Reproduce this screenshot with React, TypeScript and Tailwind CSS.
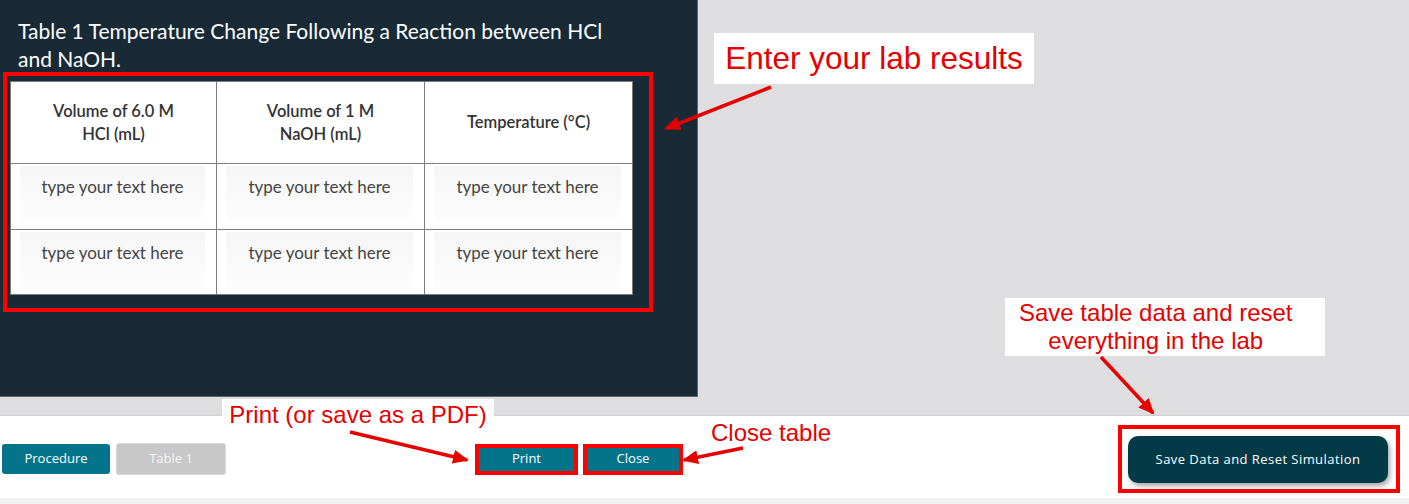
import React from "react";

const cellText = "type your text here";

function InputCell({ last }: { last?: boolean }) {
  return (
    <div className={`h-full pl-[9px] pr-[11px] pt-[2px] ${last ? "" : "border-r border-[#7f7f7f]"}`}>
      <div className="h-[57px] bg-gradient-to-b from-[#f6f6f6] to-[#fdfdfd] text-center pt-[10px] text-[17px] leading-[22px] text-[#444]">
        {cellText}
      </div>
    </div>
  );
}

function HeaderCell({ children, last }: { children: React.ReactNode; last?: boolean }) {
  return (
    <div
      className={`h-full flex items-center justify-center text-center text-[16.5px] leading-[23px] font-semibold text-[#333] ${
        last ? "" : "border-r border-[#7f7f7f]"
      }`}
    >
      <div>{children}</div>
    </div>
  );
}

export default function App() {
  return (
    <div className="relative w-[1409px] h-[504px] overflow-hidden bg-[#dedee0] font-['Lato',sans-serif]">
      {/* top area */}
      <div className="h-[415px] flex">
        <div className="w-[698px] h-[397px] bg-[#172a36] border-r border-b border-[#56636b] pt-[17px]">
          <h1 className="pl-[18px] text-[21px] leading-[28px] text-white font-normal">
            Table 1 Temperature Change Following a Reaction between HCl
            <br />
            and NaOH.
          </h1>
          <div className="mt-[8px] ml-[10px] w-[623px] bg-white border border-[#7a7a7a]">
            <div className="grid grid-cols-[206px_208px_1fr] h-[82px] border-b border-[#7f7f7f]">
              <HeaderCell>
                Volume of 6.0 M
                <br />
                HCl (mL)
              </HeaderCell>
              <HeaderCell>
                Volume of 1 M
                <br />
                NaOH (mL)
              </HeaderCell>
              <HeaderCell last>Temperature (°C)</HeaderCell>
            </div>
            <div className="grid grid-cols-[206px_208px_1fr] h-[66px] border-b border-[#7f7f7f]">
              <InputCell />
              <InputCell />
              <InputCell last />
            </div>
            <div className="grid grid-cols-[206px_208px_1fr] h-[64px]">
              <InputCell />
              <InputCell />
              <InputCell last />
            </div>
          </div>
        </div>
      </div>
      <div className="h-px bg-[#cfcfcf]" />
      {/* bottom bar */}
      <div className="h-[82px] bg-white flex items-center pt-[4px] font-['Open_Sans',sans-serif] text-[13px] font-medium">
        <button className="ml-[2px] w-[108px] h-[30px] rounded-[3px] bg-[#03748a] text-white">Procedure</button>
        <button className="ml-[6px] w-[110px] h-[32px] rounded-[3px] bg-[#c8c8c8] border border-[#d8d8d8] text-[#f4f4f4]">
          Table 1
        </button>
        <button className="ml-[249px] w-[103px] h-[31px] border-4 border-[#ff0000] bg-[#03748a] text-white">Print</button>
        <button className="ml-[5px] w-[100px] h-[31px] border-4 border-[#ff0000] bg-[#03748a] text-white">Close</button>
        <div className="ml-auto mr-[9px] border-4 border-[#ff0000] pl-[6px] pr-[8px] pt-[7px] pb-[6px]">
          <button className="w-[260px] h-[47px] rounded-[10px] bg-[#033a48] text-white tracking-[0.45px] shadow-[2px_3px_5px_rgba(0,0,0,0.35)]">
            Save Data and Reset Simulation
          </button>
        </div>
      </div>
      <div className="h-[6px] bg-[#f2f2f2]" />

      {/* annotations */}
      <div className="absolute left-[3px] top-[72px] w-[650px] h-[240px] border-4 border-[#ff0000]" />
      <div className="absolute left-[714px] top-[33px] w-[320px] h-[51px] bg-white flex items-center justify-center font-['Liberation_Sans',sans-serif] text-[31.5px] text-[#e60000]">
        Enter your lab results
      </div>
      <div className="absolute left-[1005px] top-[298px] w-[320px] h-[58px] bg-white flex items-center pl-[14px] font-['Liberation_Sans',sans-serif] text-[24px] leading-[28px] text-[#e60000]">
        <div className="text-center">
          Save table data and reset
          <br />
          everything in the lab
        </div>
      </div>
      <div className="absolute left-[222px] top-[399px] w-[272px] h-[32px] bg-white flex items-center justify-center font-['Liberation_Sans',sans-serif] text-[24px] leading-[28px] text-[#e60000]">
        Print (or save as a PDF)
      </div>
      <div className="absolute left-[711px] top-[419px] font-['Liberation_Sans',sans-serif] text-[24px] leading-[28px] text-[#e60000]">
        Close table
      </div>
      <svg className="absolute inset-0 pointer-events-none" width="1409" height="504" viewBox="0 0 1409 504">
        <defs>
          <marker id="ah" markerUnits="userSpaceOnUse" markerWidth="16" markerHeight="14" refX="14" refY="7" orient="auto">
            <path d="M0,0 L16,7 L0,14 Z" fill="#e60000" />
          </marker>
        </defs>
        <g stroke="#e60000" strokeWidth="3.5" fill="none">
          <line x1="771" y1="87" x2="666" y2="128.5" markerEnd="url(#ah)" />
          <line x1="1101" y1="357" x2="1153" y2="413" markerEnd="url(#ah)" />
          <line x1="350" y1="432" x2="467" y2="460" markerEnd="url(#ah)" />
          <line x1="743" y1="448" x2="684" y2="460" markerEnd="url(#ah)" />
        </g>
      </svg>
    </div>
  );
}
